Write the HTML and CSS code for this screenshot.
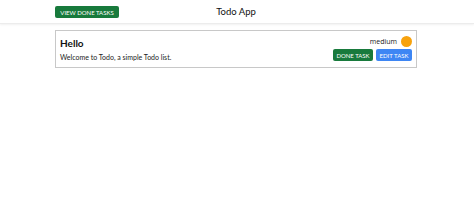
FILE: index.html
```html
<!DOCTYPE html>
<html lang="en">
<head>
    <meta charset="UTF-8">
    <title>Todo App</title>
    <link rel="stylesheet" href="styles.css">
</head>
<body>
    <header class="top-bar">
        <div class="top-inner">
            <button class="btn btn-green">VIEW DONE TASKS</button>
            <h1 class="app-title">Todo App</h1>
        </div>
    </header>

    <main class="task-list">
        <div class="task-card">
            <div class="task-text">
                <h2 class="task-title">Hello</h2>
                <p class="task-desc">Welcome to Todo, a simple Todo list.</p>
            </div>
            <div class="task-side">
                <div class="priority">
                    <span class="priority-label">medium</span>
                    <span class="dot"></span>
                </div>
                <div class="task-actions">
                    <button class="btn btn-green">DONE TASK</button>
                    <button class="btn btn-blue">EDIT TASK</button>
                </div>
            </div>
        </div>
    </main>
</body>
</html>
```

FILE: styles.css
```css
* {
    margin: 0;
    padding: 0;
    box-sizing: border-box;
}

body {
    background: #fff;
    font-family: 'Lato', sans-serif;
    color: #111;
}

.top-bar {
    height: 24px;
    border-bottom: 1px solid #ececec;
    box-shadow: 0 1px 2px rgba(0, 0, 0, 0.06);
}

.top-inner {
    position: relative;
    width: 362px;
    margin-left: 55px;
    height: 100%;
    display: flex;
    align-items: center;
}

.app-title {
    position: absolute;
    left: 0;
    right: 0;
    text-align: center;
    font-size: 9.5px;
    font-weight: 400;
    pointer-events: none;
}

.btn {
    border: none;
    border-radius: 2px;
    color: #fff;
    font-family: 'Lato', sans-serif;
    font-size: 6px;
    height: 12px;
    padding: 0 4px;
    white-space: nowrap;
}

.top-inner .btn {
    width: 64px;
    margin-top: 1px;
}

.btn-green {
    background: #187a3c;
}

.btn-blue {
    background: #3d86f4;
}

.task-list {
    width: 362px;
    margin: 6px 0 0 55px;
}

.task-card {
    border: 1px solid #c8c8c8;
    height: 38px;
    display: flex;
    justify-content: space-between;
    padding: 5px 4px 0 4px;
}

.task-title {
    font-size: 10px;
    font-weight: 700;
    line-height: 12px;
    margin-top: 1px;
}

.task-desc {
    font-size: 7px;
    line-height: 10px;
    margin-top: 3px;
    color: #222;
}

.task-side {
    display: flex;
    flex-direction: column;
    align-items: flex-end;
}

.priority {
    display: flex;
    align-items: center;
    gap: 4px;
    height: 11px;
}

.priority-label {
    font-family: 'Open Sans', sans-serif;
    font-size: 7px;
    font-weight: 400;
    color: #222;
}

.dot {
    width: 11px;
    height: 11px;
    border-radius: 50%;
    background: #f7a20d;
}

.task-actions {
    display: flex;
    gap: 3px;
    margin-top: 2px;
}

.task-actions .btn-green {
    width: 40px;
    padding: 0;
}

.task-actions .btn-blue {
    width: 36px;
    padding: 0;
}
```
